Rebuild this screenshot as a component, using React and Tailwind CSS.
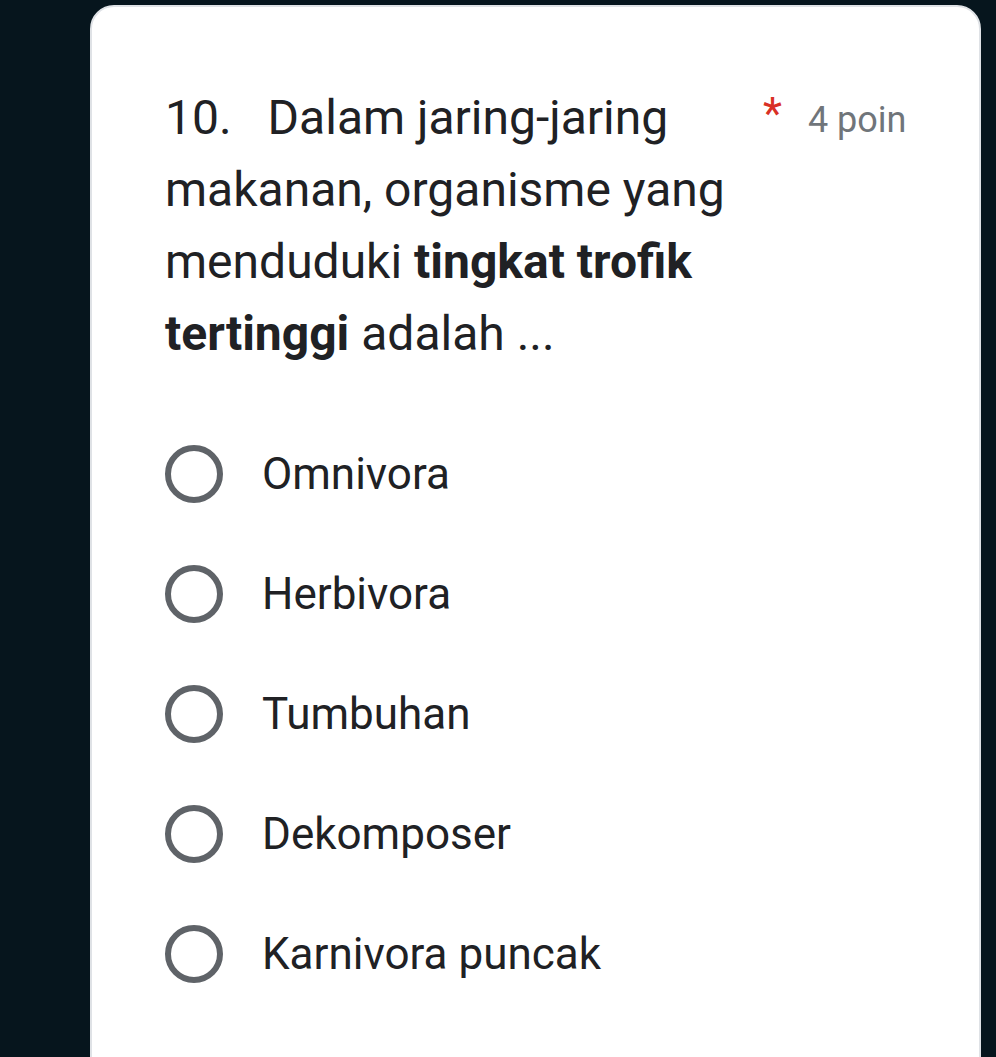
export default function App() {
  const options = ["Omnivora", "Herbivora", "Tumbuhan", "Dekomposer", "Karnivora puncak"];
  return (
    <div className="w-[996px] h-[1057px] bg-[#06151d] overflow-hidden pt-[5px]" style={{ fontFamily: "Roboto, 'Noto Sans', sans-serif" }}>
      <div className="ml-[90px] w-[891px] h-[1100px] bg-white rounded-t-[24px] border-2 border-[#dfe2e6] pl-[73px] pt-[75px]">
        <div className="flex items-start">
          <div className="w-[590px] text-[48px] leading-[72px] text-[#202124]">
            <span className="mr-[36px]">10.</span>Dalam jaring-jaring makanan, organisme yang menduduki <span className="font-bold">tingkat trofik tertinggi</span> adalah ...
          </div>
          <div className="flex items-start ml-[8px] pt-[10px]">
            <span className="text-[#d93025] text-[44px] leading-[44px]">*</span>
            <span className="ml-[26px] -mt-[2px] text-[36px] leading-[60px] text-[#70757a]">4 poin</span>
          </div>
        </div>
        <div className="mt-[44px] flex flex-col">
          {options.map((o) => (
            <div key={o} className="h-[120px] flex items-center">
              <div className="w-[58px] h-[58px] rounded-full border-[6px] border-[#5f6368] shrink-0"></div>
              <span className="ml-[39px] text-[44px] text-[#202124]">{o}</span>
            </div>
          ))}
        </div>
      </div>
    </div>
  );
}
